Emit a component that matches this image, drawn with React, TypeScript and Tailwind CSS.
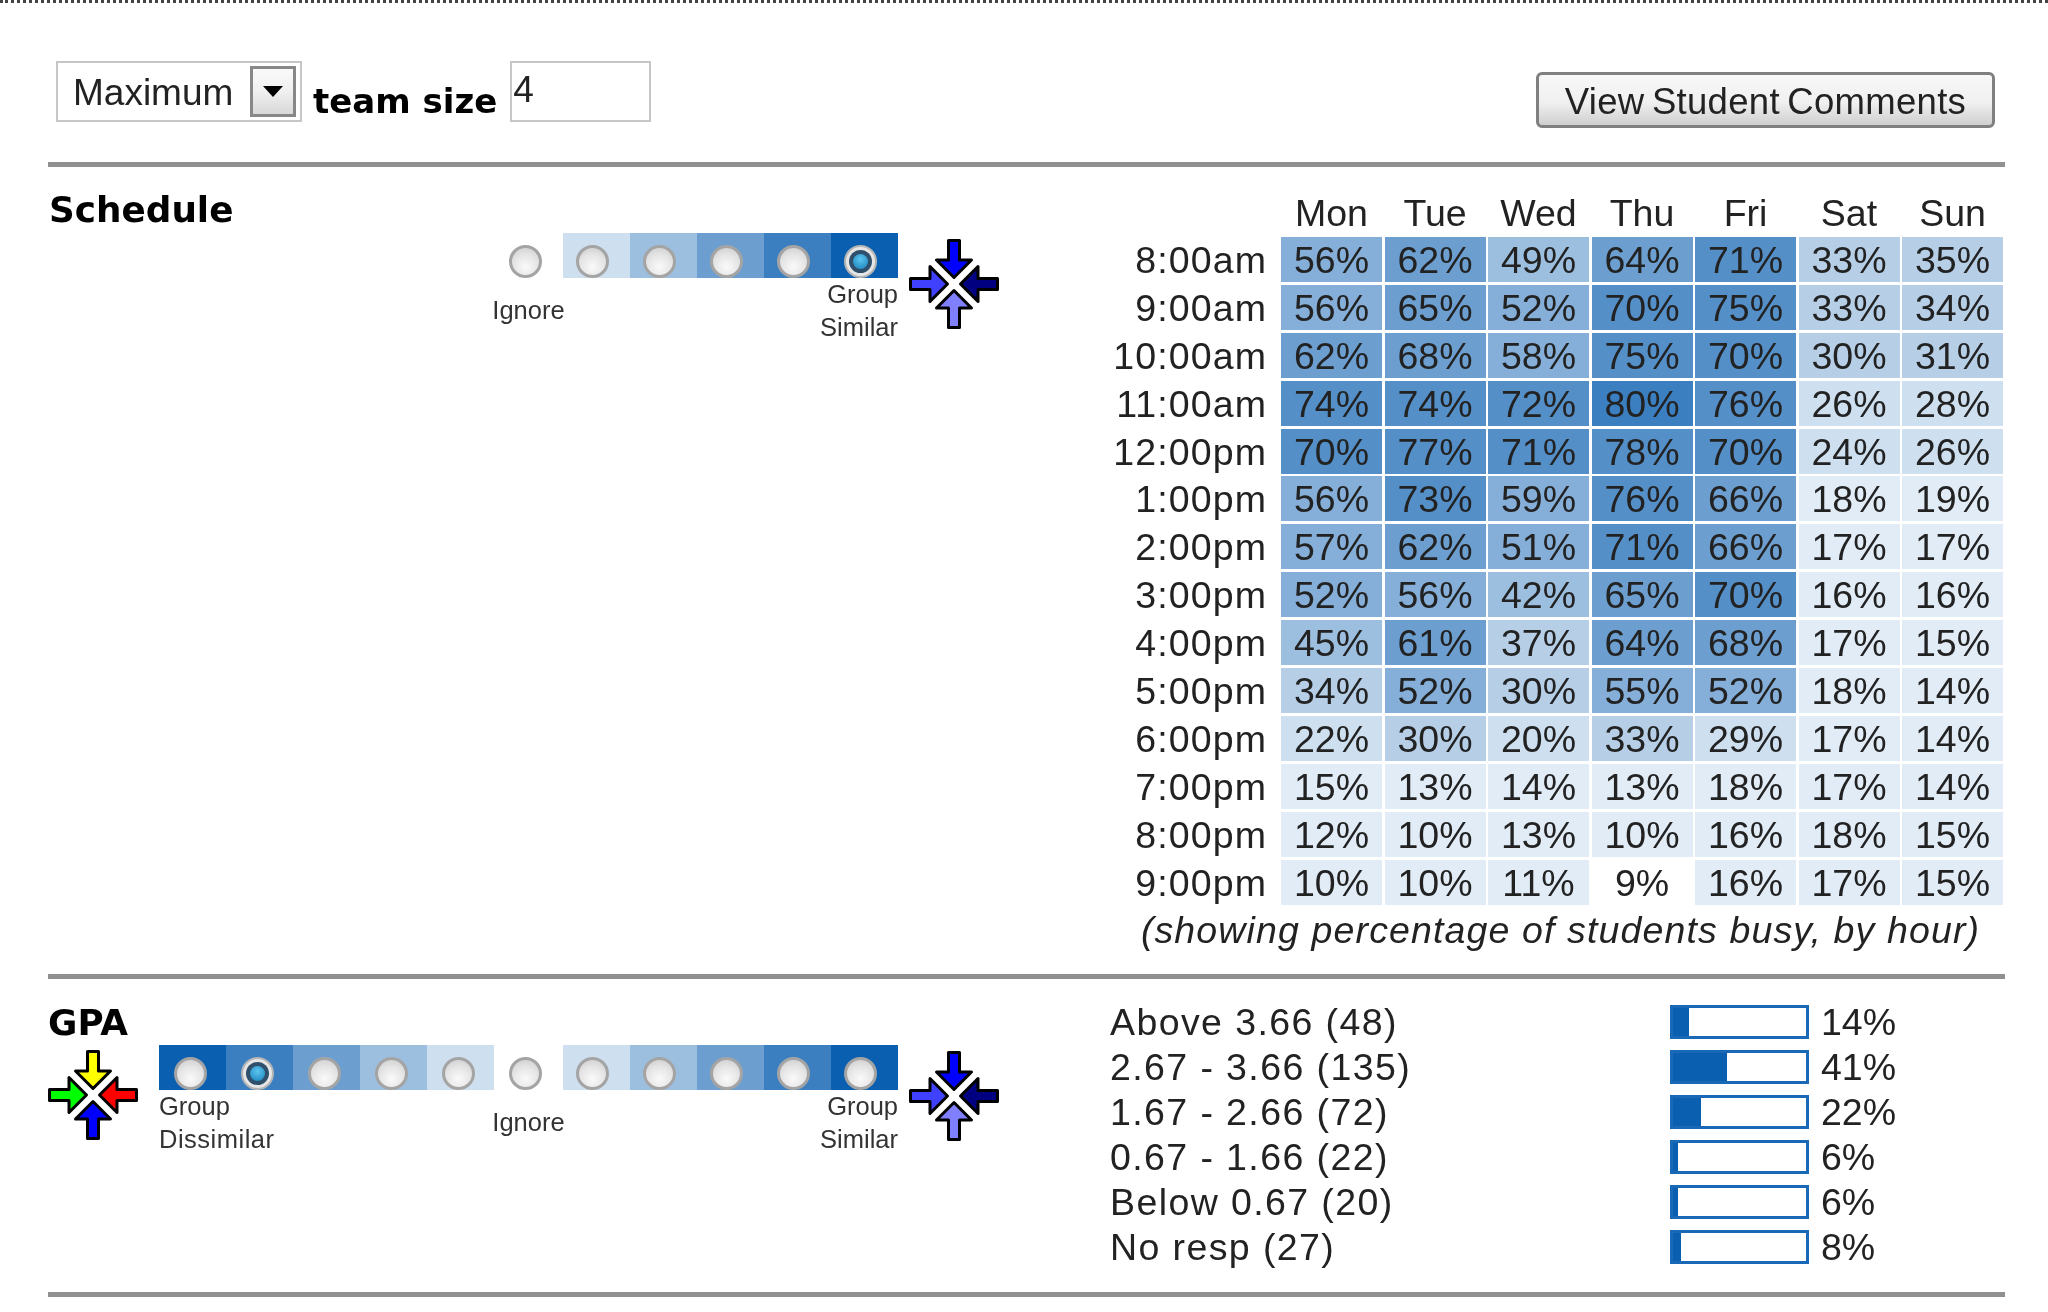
const ARIAL = "font-['Liberation_Sans',Arial,sans-serif]";
const VERDANA = "font-['DejaVu_Sans',Verdana,sans-serif]";

const days = ['Mon', 'Tue', 'Wed', 'Thu', 'Fri', 'Sat', 'Sun'];

const schedule: [string, number[]][] = [
  ['8:00am', [56, 62, 49, 64, 71, 33, 35]],
  ['9:00am', [56, 65, 52, 70, 75, 33, 34]],
  ['10:00am', [62, 68, 58, 75, 70, 30, 31]],
  ['11:00am', [74, 74, 72, 80, 76, 26, 28]],
  ['12:00pm', [70, 77, 71, 78, 70, 24, 26]],
  ['1:00pm', [56, 73, 59, 76, 66, 18, 19]],
  ['2:00pm', [57, 62, 51, 71, 66, 17, 17]],
  ['3:00pm', [52, 56, 42, 65, 70, 16, 16]],
  ['4:00pm', [45, 61, 37, 64, 68, 17, 15]],
  ['5:00pm', [34, 52, 30, 55, 52, 18, 14]],
  ['6:00pm', [22, 30, 20, 33, 29, 17, 14]],
  ['7:00pm', [15, 13, 14, 13, 18, 17, 14]],
  ['8:00pm', [12, 10, 13, 10, 16, 18, 15]],
  ['9:00pm', [10, 10, 11, 9, 16, 17, 15]],
];

const gpa: [string, number][] = [
  ['Above 3.66 (48)', 14],
  ['2.67 - 3.66 (135)', 41],
  ['1.67 - 2.66 (72)', 22],
  ['0.67 - 1.66 (22)', 6],
  ['Below 0.67 (20)', 6],
  ['No resp (27)', 8],
];

// white to #0a5fb0, stepped by tens
function heat(pct: number) {
  const step = Math.floor(pct / 10);
  const a = step === 0 ? 0 : step === 1 ? 0.12 : step / 10;
  const mix = (c: number) => Math.round(255 - (255 - c) * a);
  return `rgb(${mix(10)},${mix(95)},${mix(176)})`;
}

const shades = ['bg-[#cedfef]', 'bg-[#9dbfdf]', 'bg-[#6c9fd0]', 'bg-[#3b7fc0]', 'bg-[#0a5fb0]'];

function Radio({ checked }: { checked?: boolean }) {
  if (checked) {
    return (
      <span className="flex h-[33px] w-[33px] shrink-0 items-center justify-center rounded-full border-[2px] border-[#b5b5b5] bg-[#e6e6e6]">
        <span className="flex h-[23px] w-[23px] items-center justify-center rounded-full bg-[#2f4f6b]">
          <span className="h-[15px] w-[15px] rounded-full bg-[radial-gradient(circle_at_50%_35%,#5cc4ee,#1681bd)]" />
        </span>
      </span>
    );
  }
  return (
    <span className="h-[33px] w-[33px] shrink-0 rounded-full border-[3px] border-[#a4a4a4] bg-[radial-gradient(circle_at_50%_70%,#fafafa,#e4e4e4_55%,#c8c8c8)]" />
  );
}

function Cross({ colors }: { colors: [string, string, string, string] }) {
  const [top, left, right, bottom] = colors;
  const arrow = 'M-5.5 -43.5H5.5V-24H17.5L0 -6.5L-17.5 -24H-5.5Z';
  return (
    <svg width="90" height="90" viewBox="-45 -45 90 90" className="shrink-0">
      <g stroke="#000" strokeWidth="3" strokeLinejoin="round">
        <path d={arrow} fill={top} />
        <path d={arrow} fill={right} transform="rotate(90)" />
        <path d={arrow} fill={bottom} transform="rotate(180)" />
        <path d={arrow} fill={left} transform="rotate(270)" />
      </g>
    </svg>
  );
}

function Slider({ selected, twoSided }: { selected: number; twoSided?: boolean }) {
  return (
    <div className={`flex items-start ${twoSided ? '' : 'ml-[446px]'}`}>
      {twoSided && (
        <div className="mr-[21px] mt-[5px]">
          <Cross colors={['#ffff00', '#00ff00', '#ff0000', '#0000ff']} />
        </div>
      )}
      <div className={ARIAL}>
        <div className="flex">
          {twoSided && (
            <div className="flex w-[335px]">
              {[4, 3, 2, 1, 0].map((shade, i) => (
                <div key={shade} className={`flex h-[45px] flex-1 items-end pl-[15px] ${shades[shade]}`}>
                  <Radio checked={selected === i - 5} />
                </div>
              ))}
            </div>
          )}
          <div className="flex h-[45px] w-[69px] items-end pl-[15px]">
            <Radio checked={selected === 0} />
          </div>
          <div className="flex w-[335px]">
            {shades.map((shade, i) => (
              <div key={shade} className={`flex h-[45px] flex-1 items-end pl-[13px] ${shade}`}>
                <Radio checked={selected === i + 1} />
              </div>
            ))}
          </div>
        </div>
        <div className="flex text-[25.5px] leading-[33px] text-[#333]">
          {twoSided && (
            <div className="w-[335px]">
              Group
              <br />
              <span className="tracking-[0.5px]">Dissimilar</span>
            </div>
          )}
          <div className="flex w-[69px] justify-center whitespace-nowrap pt-[16px]">Ignore</div>
          <div className="w-[335px] text-right">
            Group
            <br />
            Similar
          </div>
        </div>
      </div>
      <div className="ml-[11px] mt-[6px]">
        <Cross colors={['#0000ff', '#4040ff', '#000080', '#8080ff']} />
      </div>
    </div>
  );
}

function Rule() {
  return <div className="h-[5px] bg-[#909090]" />;
}

function Toolbar() {
  return (
    <div className="flex h-[159px] items-start justify-between pl-[8px] pr-[10px]">
      <div className="flex items-start pt-[58px]">
        <div className={`flex h-[61px] w-[246px] items-center justify-between border-[2px] border-[#c6c6c6] pl-[15px] pr-[4px] pt-[2px] text-[37px] text-[#222] ${ARIAL}`}>
          <span>Maximum</span>
          <span className="mb-[2px] flex h-[51px] w-[46px] items-center justify-center border-[3px] border-[#888] bg-[linear-gradient(#fafafa,#f0f0f0_50%,#d8d8d8)]">
            <span className="h-0 w-0 border-x-[10px] border-t-[11px] border-x-transparent border-t-black" />
          </span>
        </div>
        <span className={`ml-[11px] mr-[13px] mt-[15px] text-[34px] font-bold leading-[50px] text-black ${VERDANA}`}>team size</span>
        <input
          defaultValue="4"
          className={`h-[61px] w-[141px] border-[2px] border-[#c6c6c6] pb-[4px] pl-[1px] text-[37px] text-[#222] outline-none ${ARIAL}`}
        />
      </div>
      <div className="pt-[69px]">
        <button className={`h-[56px] w-[459px] rounded-[6px] border-[3px] border-[#808080] bg-[linear-gradient(#f8f8f8,#f0f0f0_55%,#cfcfcf)] text-[36.5px] tracking-[0.3px] [word-spacing:-3px] text-[#222] ${ARIAL}`}>
          View Student Comments
        </button>
      </div>
    </div>
  );
}

function ScheduleGrid() {
  return (
    <div className={`w-[895px] pt-[2px] text-[37.5px] text-[#222] ${ARIAL}`}>
      <div className="flex h-[43px] pl-[157px]">
        <div className="ml-[14px] grid grid-cols-[repeat(7,101px)] gap-x-[2.5px]">
          {days.map((d) => (
            <div key={d} className="pt-[1px] text-center leading-[42px]">{d}</div>
          ))}
        </div>
      </div>
      <div className="mt-[3px] flex flex-col gap-y-[2.9px]">
        {schedule.map(([time, row]) => (
          <div key={time} className="flex">
            <div className="h-[45px] w-[157px] whitespace-nowrap pt-[1px] text-right leading-[45px] tracking-[1.1px]">{time}</div>
            <div className="ml-[14px] grid grid-cols-[repeat(7,101px)] gap-x-[2.5px]">
              {row.map((v, i) => (
                <div key={i} className="h-[45px] pt-[1px] text-center leading-[45px]" style={{ backgroundColor: heat(v) }}>
                  {v}%
                </div>
              ))}
            </div>
          </div>
        ))}
      </div>
      <div className="mt-[2px] pl-[6px] text-center italic leading-[46px] tracking-[1.13px]">(showing percentage of students busy, by hour)</div>
    </div>
  );
}

function GpaList() {
  return (
    <div className={`mt-[-2px] w-[895px] text-[37.5px] text-[#222] ${ARIAL}`}>
      {gpa.map(([label, pct]) => (
        <div key={label} className="flex h-[45px] items-center">
          <div className="w-[560px] whitespace-nowrap pt-[2px] tracking-[1.4px]">{label}</div>
          <div className="h-[34px] w-[139px] border-[3px] border-[#1a69b6]">
            <div className="h-full bg-[#0a5fb0]" style={{ width: (pct / 100) * 139 - 3 }} />
          </div>
          <div className="ml-[12px] pt-[2px]">{pct}%</div>
        </div>
      ))}
    </div>
  );
}

const sectionTitle = `text-[35.8px] font-bold text-black ${VERDANA}`;

export default function App() {
  return (
    <div className="h-[1312px] w-[2048px] overflow-hidden bg-white blur-[0.7px]">
      <div className="border-t-[3px] border-dotted border-[#444]" />
      <div className="ml-[48px] mr-[43px]">
        <Toolbar />
        <Rule />
        <div className="flex h-[807px] justify-between pt-[22px]">
          <div>
            <div className={`${sectionTitle} mb-[2px] ml-[1px] leading-[42px]`}>Schedule</div>
            <Slider selected={5} />
          </div>
          <ScheduleGrid />
        </div>
        <Rule />
        <div className="flex h-[313px] justify-between pt-[22px]">
          <div>
            <div className={`${sectionTitle} leading-[44px]`}>GPA</div>
            <Slider selected={-4} twoSided />
          </div>
          <GpaList />
        </div>
        <Rule />
      </div>
    </div>
  );
}
